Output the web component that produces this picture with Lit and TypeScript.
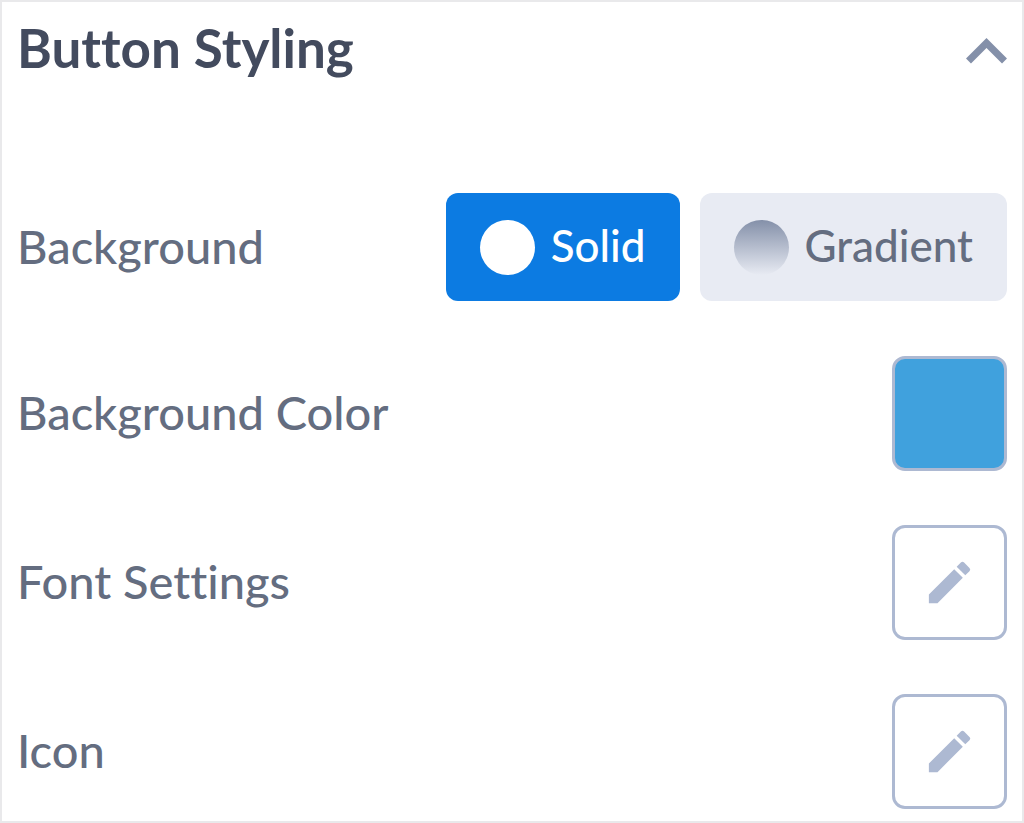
import { LitElement, html, css, svg } from "lit";
import { customElement, state } from "lit/decorators.js";

@customElement("app-root")
export class AppRoot extends LitElement {
  @state() private mode = "solid";
  @state() private open = true;

  static styles = css`
    :host {
      display: block;
      font-family: Lato, "Open Sans", sans-serif;
      font-weight: 500;
      font-variant-ligatures: none;
      color: #646d80;
    }
    * {
      box-sizing: border-box;
    }
    .panel {
      background: #fff;
      border: 2px solid #e9e9eb;
      padding: 12px 15px;
      min-height: 100vh;
    }
    button {
      font: inherit;
      font-variant-ligatures: none;
      color: inherit;
      cursor: pointer;
      margin: 0;
    }
    .header {
      display: flex;
      align-items: center;
      justify-content: space-between;
      margin-bottom: 107px;
    }
    h2 {
      margin: 0;
      padding-bottom: 4px;
      font-size: 53px;
      line-height: 68px;
      font-weight: 700;
      color: #434b5e;
    }
    .toggle {
      display: flex;
      border: 0;
      padding: 2px 0 0;
      background: none;
    }
    .rows {
      display: flex;
      flex-direction: column;
      gap: 54px;
    }
    .row {
      display: flex;
      align-items: center;
      justify-content: space-between;
      font-size: 47px;
      line-height: 56px;
    }
    .label {
      padding-bottom: 4px;
    }
    .choices {
      display: flex;
      gap: 20px;
      padding-bottom: 1px;
    }
    .choice {
      display: flex;
      align-items: center;
      gap: 16px;
      height: 108px;
      padding: 0 34px;
      border: 0;
      border-radius: 12px;
      background: #e8ebf3;
      font-size: 44px;
    }
    .choice.active {
      background: #0c7be2;
      color: #fff;
    }
    .dot {
      width: 55px;
      height: 55px;
      border-radius: 50%;
      background: #fff;
    }
    .dot.fade {
      background: linear-gradient(#8490a9, #e8ebf3);
    }
    .square {
      display: flex;
      align-items: center;
      justify-content: center;
      width: 115px;
      height: 115px;
      padding: 0;
      border: 3px solid #adb9d2;
      border-radius: 13px;
      background: #fff;
    }
    .square.swatch {
      background: #40a1dd;
    }
  `;

  private pencil() {
    return svg`<svg width="55" height="55" viewBox="0 0 24 24" fill="#adb9d2" aria-hidden="true">
      <path d="M3 17.25V21h3.750L17.810 9.940l-3.750-3.750L3 17.250zM20.710 7.040a1 1 0 0 0 0-1.410l-2.340-2.340a1 1 0 0 0-1.410 0l-1.830 1.830 3.750 3.750 1.830-1.830z"/>
    </svg>`;
  }

  private choice(id: string, label: string, dot: string) {
    return html`<button
      class="choice ${this.mode === id ? "active" : ""}"
      aria-pressed=${this.mode === id}
      @click=${() => (this.mode = id)}
    ><span class=${dot}></span><span class="label">${label}</span></button>`;
  }

  render() {
    return html`<section class="panel">
      <header class="header">
        <h2>Button Styling</h2>
        <button class="toggle" aria-label="Toggle section" aria-expanded=${this.open} @click=${() => (this.open = !this.open)}>
          <svg width="41" height="26" viewBox="0 0 41 26" fill="none" stroke="#8490a9" stroke-width="7" aria-hidden="true"><path d="M2.500 23 20.500 5l18 18"/></svg>
        </button>
      </header>
      ${this.open ? html`<div class="rows">
        <div class="row" role="group" aria-labelledby="bg">
          <span class="label" id="bg">Background</span>
          <div class="choices">
            ${this.choice("solid", "Solid", "dot")}
            ${this.choice("gradient", "Gradient", "dot fade")}
          </div>
        </div>
        <div class="row"><label class="label" for="color">Background Color</label><button id="color" class="square swatch"></button></div>
        <div class="row"><label class="label" for="font">Font Settings</label><button id="font" class="square">${this.pencil()}</button></div>
        <div class="row"><label class="label" for="icon">Icon</label><button id="icon" class="square">${this.pencil()}</button></div>
      </div>` : ""}
    </section>`;
  }
}
